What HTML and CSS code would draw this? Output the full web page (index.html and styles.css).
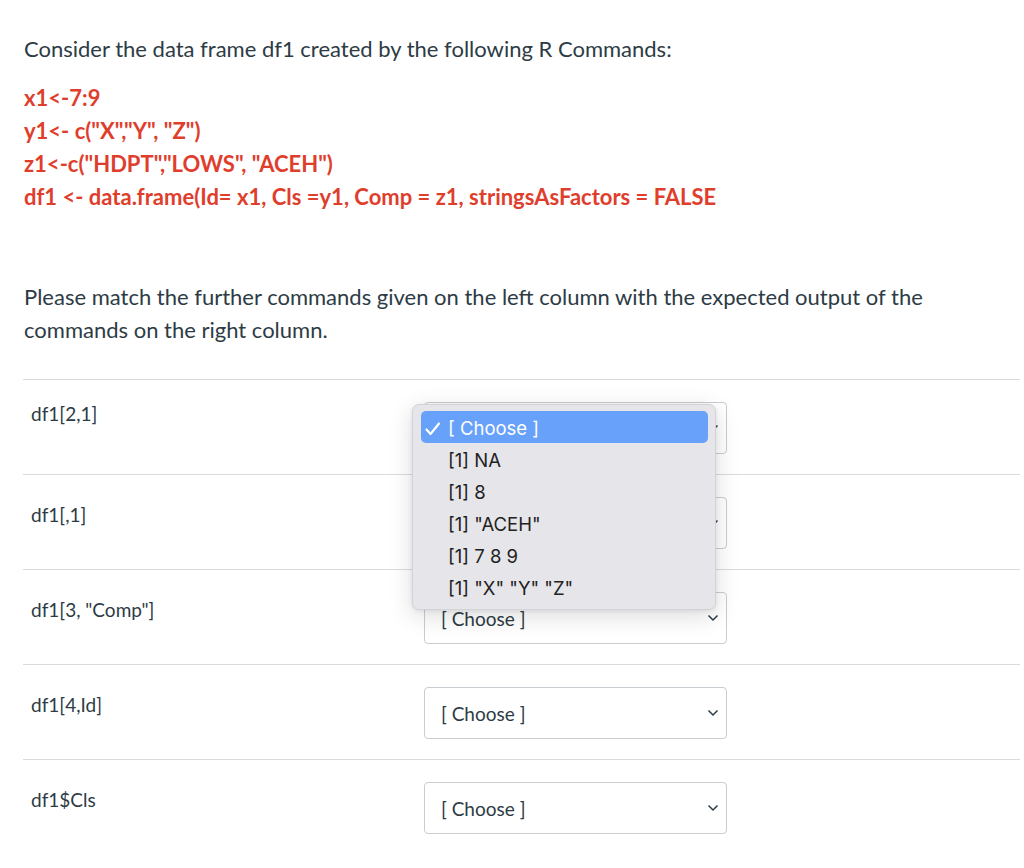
FILE: index.html
```html
<!DOCTYPE html>
<html>
<head>
<meta charset="utf-8">
<link rel="stylesheet" href="styles.css">
</head>
<body>
<div class="page">
  <p class="intro">Consider the data frame df1 created by the following R Commands:</p>
  <div class="code">
    <p>x1&lt;-7:9</p>
    <p>y1&lt;- c("X","Y", "Z")</p>
    <p>z1&lt;-c("HDPT","LOWS", "ACEH")</p>
    <p>df1 &lt;- data.frame(Id= x1, Cls =y1, Comp = z1, stringsAsFactors = FALSE</p>
  </div>
  <p class="instr">Please match the further commands given on the left column with the expected output of the commands on the right column.</p>

  <div class="rows">
    <div class="row first">
      <div class="label">df1[2,1]</div>
      <div class="select">
        <span class="sel-text">[ Choose ]</span>
        <svg class="chev" width="12" height="8" viewBox="0 0 12 8"><polyline points="1.5,1.5 6,6 10.5,1.5" fill="none" stroke="#2d3b45" stroke-width="1.5"/></svg>
      </div>
      <div class="menu">
        <div class="item active"><svg class="check" width="16" height="14" viewBox="0 0 16 14"><polyline points="1.5,7.5 5.5,12 14,1.5" fill="none" stroke="#ffffff" stroke-width="2.2" stroke-linecap="round" stroke-linejoin="round"/></svg>[ Choose ]</div>
        <div class="item">[1] NA</div>
        <div class="item">[1] 8</div>
        <div class="item">[1] "ACEH"</div>
        <div class="item">[1] 7 8 9</div>
        <div class="item">[1] "X" "Y" "Z"</div>
      </div>
    </div>
    <div class="row">
      <div class="label">df1[,1]</div>
      <div class="select">
        <span class="sel-text">[ Choose ]</span>
        <svg class="chev" width="12" height="8" viewBox="0 0 12 8"><polyline points="1.5,1.5 6,6 10.5,1.5" fill="none" stroke="#2d3b45" stroke-width="1.5"/></svg>
      </div>
    </div>
    <div class="row">
      <div class="label">df1[3, "Comp"]</div>
      <div class="select">
        <span class="sel-text">[ Choose ]</span>
        <svg class="chev" width="12" height="8" viewBox="0 0 12 8"><polyline points="1.5,1.5 6,6 10.5,1.5" fill="none" stroke="#2d3b45" stroke-width="1.5"/></svg>
      </div>
    </div>
    <div class="row">
      <div class="label">df1[4,Id]</div>
      <div class="select">
        <span class="sel-text">[ Choose ]</span>
        <svg class="chev" width="12" height="8" viewBox="0 0 12 8"><polyline points="1.5,1.5 6,6 10.5,1.5" fill="none" stroke="#2d3b45" stroke-width="1.5"/></svg>
      </div>
    </div>
    <div class="row">
      <div class="label">df1$Cls</div>
      <div class="select">
        <span class="sel-text">[ Choose ]</span>
        <svg class="chev" width="12" height="8" viewBox="0 0 12 8"><polyline points="1.5,1.5 6,6 10.5,1.5" fill="none" stroke="#2d3b45" stroke-width="1.5"/></svg>
      </div>
    </div>
  </div>
</div>
</body>
</html>
```

FILE: styles.css
```css
html, body {
  margin: 0;
  padding: 0;
  background: #ffffff;
}
.page {
  font-family: Lato, "Liberation Sans", sans-serif;
  color: #2d3b45;
  padding: 32px 4px 0 24px;
}
.page .intro {
  margin: 0;
  font-size: 22px;
  line-height: 33px;
}
.code {
  margin-top: 16px;
  color: #e03e2d;
  font-size: 22px;
  font-weight: 700;
  line-height: 33px;
}
.code p {
  margin: 0;
}
.page .instr {
  margin: 67px 0 0 0;
  font-size: 22px;
  line-height: 33px;
  max-width: 915px;
}
.rows {
  margin-top: 33px;
  margin-left: -1px;
}
.row {
  position: relative;
  display: flex;
  align-items: flex-start;
  border-top: 1px solid #d9dcdf;
  padding: 22px 0 20px 8px;
}
.label {
  width: 393px;
  font-size: 19px;
  line-height: 22px;
  padding-top: 7px;
}
.row.first .label {
  padding-top: 1px;
}
.select {
  box-sizing: border-box;
  width: 303px;
  height: 52px;
  border: 1px solid #c7cdd1;
  border-radius: 4px;
  background: #ffffff;
  display: flex;
  align-items: center;
  justify-content: space-between;
  padding: 0 7px 0 16px;
}
.sel-text {
  font-size: 19px;
}
.chev {
  display: block;
}
.menu {
  position: absolute;
  left: 389px;
  top: 24px;
  width: 304px;
  box-sizing: border-box;
  padding: 6px 7px 6px 8px;
  background: #e6e5e9;
  border: 1px solid #d3d2d6;
  border-radius: 7px;
  box-shadow: 0 6px 24px rgba(0, 0, 0, 0.14), 0 1px 4px rgba(0, 0, 0, 0.08);
  font-family: Inter, "Liberation Sans", Arial, sans-serif;
  font-size: 18.5px;
  color: #222222;
  z-index: 5;
}
.item {
  height: 30px;
  line-height: 30px;
  padding: 2px 0 0 27px;
  position: relative;
  border-radius: 5px;
}
.item.active {
  background: #68a1f9;
  color: #ffffff;
}
.check {
  position: absolute;
  left: 4px;
  top: 11px;
}
```
